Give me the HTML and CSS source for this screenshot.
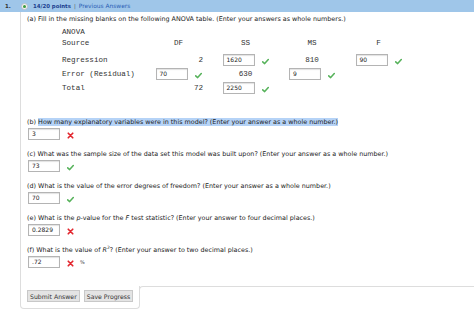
FILE: index.html
```html
<!DOCTYPE html>
<html lang="en">
<head>
    <meta charset="UTF-8">
    <title>ANOVA Question</title>
    <link rel="stylesheet" href="styles.css">
</head>
<body>

    <div class="topbar">
        <span class="qnum">1.</span>
        <svg class="radio" width="7" height="7" viewBox="0 0 7 7"><circle cx="3.5" cy="3.5" r="3" fill="#f2f2f2" stroke="#b8b8b8" stroke-width="0.7"/><circle cx="3.5" cy="3.5" r="1.5" fill="#3c9a3c"/></svg>
        <span class="points">14/20 points</span>
        <span class="sep">|</span>
        <a class="prev">Previous Answers</a>
    </div>

    <div class="panel">
        <div class="body">
            <p class="q">(a) Fill in the missing blanks on the following ANOVA table. (Enter your answers as whole numbers.)</p>

            <div class="anova">
                <div class="cap">ANOVA</div>
                <div class="row head">
                    <div class="c0">Source</div>
                    <div class="c1">DF</div>
                    <div class="c2">SS</div>
                    <div class="c3">MS</div>
                    <div class="c4">F</div>
                </div>
                <div class="row">
                    <div class="c0">Regression</div>
                    <div class="c1 num">2</div>
                    <div class="c2"><span class="box">1620</span><span class="ok"></span></div>
                    <div class="c3">810</div>
                    <div class="c4"><span class="box">90</span><span class="ok"></span></div>
                </div>
                <div class="row">
                    <div class="c0">Error (Residual)</div>
                    <div class="c1"><span class="box">70</span><span class="ok"></span></div>
                    <div class="c2">630</div>
                    <div class="c3"><span class="box">9</span><span class="ok"></span></div>
                    <div class="c4"></div>
                </div>
                <div class="row">
                    <div class="c0">Total</div>
                    <div class="c1 num">72</div>
                    <div class="c2"><span class="box">2250</span><span class="ok"></span></div>
                    <div class="c3"></div>
                    <div class="c4"></div>
                </div>
            </div>

            <div class="part">
                <p class="q">(b) <span class="hl">How many explanatory variables were in this model? (Enter your answer as a whole number.)</span></p>
                <div class="answer"><span class="box">3</span><span class="bad"></span></div>
            </div>

            <div class="part">
                <p class="q">(c) What was the sample size of the data set this model was built upon? (Enter your answer as a whole number.)</p>
                <div class="answer"><span class="box">73</span><span class="ok"></span></div>
            </div>

            <div class="part">
                <p class="q">(d) What is the value of the error degrees of freedom? (Enter your answer as a whole number.)</p>
                <div class="answer"><span class="box">70</span><span class="ok"></span></div>
            </div>

            <div class="part">
                <p class="q">(e) What is the <i>p</i>-value for the <i>F</i> test statistic? (Enter your answer to four decimal places.)</p>
                <div class="answer"><span class="box">0.2829</span><span class="bad"></span></div>
            </div>

            <div class="part">
                <p class="q">(f) What is the value of <i>R</i><sup>2</sup>? (Enter your answer to two decimal places.)</p>
                <div class="answer"><span class="box">.72</span><span class="bad"></span><span class="unit">%</span></div>
            </div>
        </div>

        <div class="foot">
            <div class="actions">
                <button class="btn">Submit Answer</button>
                <button class="btn">Save Progress</button>
            </div>
            <div class="rest"></div>
        </div>
    </div>

</body>
</html>
```

FILE: styles.css
```css
* {
    margin: 0;
    padding: 0;
    box-sizing: border-box;
}
html, body {
    width: 100%;
    height: 100%;
    background: white;
    font-family: "DejaVu Sans", Verdana, sans-serif;
    font-size: 6.4px;
    color: #222;
}
.topbar {
    height: 12px;
    background: #9fc6e9;
    display: flex;
    align-items: center;
    padding-left: 5px;
    font-size: 5.4px;
    font-weight: bold;
}
.qnum {
    color: #333;
    width: 16px;
}
.radio {
    margin-right: 5px;
}
.points {
    color: #1c3f8f;
}
.sep {
    color: #555;
    font-weight: normal;
    margin: 0 3px;
}
.prev {
    color: #2a5db5;
    font-size: 5.9px;
    font-weight: normal;
}
.panel {
    margin-left: 20px;
}
.body {
    border-left: 1px solid #ddd;
    padding: 2px 0 18px 6px;
}
.q {
    line-height: 10px;
}
.hl {
    background: #b5d3f7;
}
.q sup {
    font-size: 4.5px;
    vertical-align: 3px;
    line-height: 0;
}

/* ANOVA table */
.anova {
    font-family: "Liberation Mono", "Courier New", monospace;
    font-size: 7.6px;
    color: #333;
    padding-left: 35px;
    margin-top: 3px;
}
.cap {
    line-height: 10px;
}
.row {
    display: grid;
    grid-template-columns: 83px 67px 67px 66px 67px;
    align-items: center;
    height: 14px;
}
.row.head {
    height: 12px;
    margin-bottom: 4px;
}
.row > div {
    display: flex;
    justify-content: center;
    align-items: center;
}
.row > .c0 {
    justify-content: flex-start;
}
.row > .num {
    justify-content: flex-end;
    padding-right: 9px;
}

/* answer boxes */
.box {
    display: inline-block;
    width: 32px;
    height: 12px;
    border: 1px solid #b4b4b4;
    box-shadow: inset 0 1px 1px rgba(0, 0, 0, 0.12);
    background: white;
    font-family: "DejaVu Sans", Verdana, sans-serif;
    font-size: 6px;
    line-height: 10px;
    padding-left: 3px;
    color: #222;
}
.ok, .bad {
    display: inline-block;
    width: 7px;
    height: 7px;
    margin-left: 7px;
    background-repeat: no-repeat;
    background-size: 7px 7px;
}
.ok {
    background-image: url("data:image/svg+xml;utf8,<svg xmlns='http://www.w3.org/2000/svg' viewBox='0 0 10 10'><path d='M1 5.5 L3.8 8 L9 2.2' fill='none' stroke='%2356b25a' stroke-width='2.2' stroke-linecap='round' stroke-linejoin='round'/></svg>");
    margin-top: 3px;
}
.bad {
    background-image: url("data:image/svg+xml;utf8,<svg xmlns='http://www.w3.org/2000/svg' viewBox='0 0 10 10'><path d='M1.8 1.8 L8.2 8.2 M8.2 1.8 L1.8 8.2' fill='none' stroke='%23e2262e' stroke-width='2.4' stroke-linecap='round'/></svg>");
    margin-top: 2px;
}
.part {
    margin-top: 22px;
}
.part + .part {
    margin-top: 9px;
}
.answer {
    display: flex;
    align-items: center;
    padding-left: 1px;
    margin-top: 1px;
}
.unit {
    margin-left: 6px;
    font-size: 5px;
    color: #444;
}

/* footer with buttons */
.foot {
    display: flex;
}
.actions {
    border: 1px solid #ddd;
    border-top: none;
    border-radius: 0 0 4px 4px;
    padding: 4px 6px 6px 6px;
    display: flex;
    gap: 4px;
}
.btn {
    font-family: "DejaVu Sans", Verdana, sans-serif;
    font-size: 6.2px;
    color: #333;
    background: #e4e4e4;
    border: 1px solid #c8c8c8;
    height: 12px;
    padding: 0 2px;
}
.rest {
    flex: 1;
    height: 10px;
    margin-left: -1px;
    border-top: 1px solid #ddd;
    border-left: 1px solid #ddd;
    border-top-left-radius: 4px;
}
```
